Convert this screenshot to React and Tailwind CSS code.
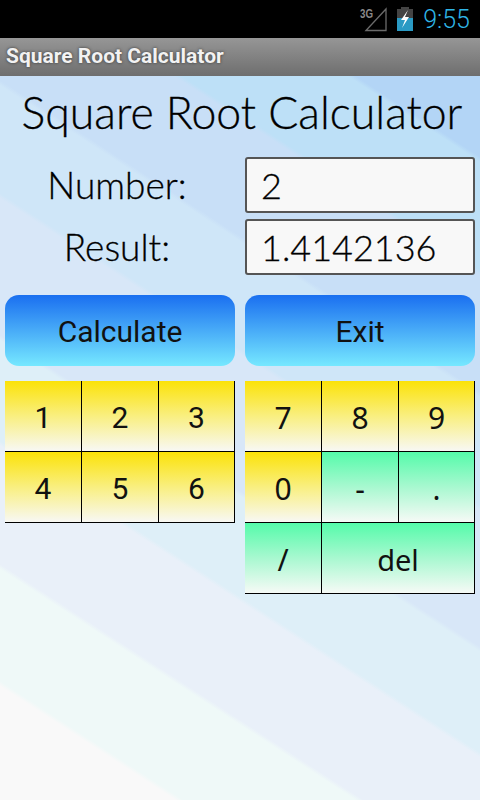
import React from 'react';

const YELLOW = 'bg-[linear-gradient(to_bottom,#fbe208,#f9ef80_50%,#f8f8f4)]';
const GREEN = 'bg-[linear-gradient(to_bottom,#55fbaa,#a8f8d0_50%,#f6faf6)]';
const BLUE_BTN = "h-[71px] w-[230px] rounded-[14px] bg-[linear-gradient(to_bottom,#1a6ff0,#76e8ff)] pt-[2px] text-[30px] text-[#111]";
const COLS = 'grid w-[230px] grid-cols-[77px_77px_76px]';

const Key = ({ label, color = YELLOW, wide }) => (
  <button
    type="button"
    className={`h-[71px] border-r border-b border-black pt-[3px] text-[#111] ${color} ${wide ? 'col-span-2 text-[29px]' : 'text-[30px]'}`}
  >
    {label}
  </button>
);

const Field = ({ label, value }) => (
  <div className="flex gap-[10px]">
    <div className="flex w-[230px] items-center justify-center pr-[6px] text-[37px] text-black [-webkit-text-stroke:0.3px_black]">
      {label}
    </div>
    <input
      readOnly
      value={value}
      className="h-[56px] w-[230px] rounded-[3px] border-2 border-[#555] bg-[#f8f8f8] pl-[14px] text-[36px] text-black outline-none [-webkit-text-stroke:0.3px_black]"
    />
  </div>
);

const StatusBar = () => (
  <div className="flex h-[38px] items-center justify-end bg-black pr-[10px]">
    {/* 3G signal */}
    <svg width="30" height="26" viewBox="0 0 30 26" className="mr-[9px] mt-[-1px]">
      <path d="M8 24.5 L28 3 V24.5 Z" fill="none" stroke="#6b6b6b" strokeWidth="1.3" />
      <text x="2" y="12" fontSize="12" fontWeight="700" fill="#8a8a8a" textLength="13" lengthAdjust="spacingAndGlyphs" fontFamily="'Liberation Sans', sans-serif">3G</text>
    </svg>
    {/* battery, charging */}
    <svg width="16" height="24" viewBox="0 0 16 24" className="mr-[10px]">
      <path d="M4 0 H12 V2 H16 V11 H0 V2 H4 Z" fill="#444" />
      <rect x="0" y="11" width="16" height="13" fill="#2a9ac4" />
      <path d="M11 3 L4 13 H8 L5 21 L12 10 H8 Z" fill="#fff" />
    </svg>
    <span className="font-['Roboto',sans-serif] text-[25px] font-light leading-none text-[#2fb5e6]">9:55</span>
  </div>
);

export default function App() {
  return (
    <div className="h-[800px] w-[480px] overflow-hidden font-['Roboto',sans-serif]">
      <StatusBar />
      <div className="flex h-[38px] items-center bg-[linear-gradient(to_bottom,#969696,#6e6e6e)] pl-[6px] text-[21px] font-bold text-[#f2f2f2] [text-shadow:0_0_3px_#333]">
        Square Root Calculator
      </div>
      <div className="h-[724px] bg-[linear-gradient(33deg,#f9f9f9_11%,#eff9f8_11.5%,#eff9f8_22.3%,#e9f0f9_22.8%,#e9f0f9_34.2%,#deeff8_34.7%,#deeff8_44.4%,#d8e7f8_44.9%,#d8e7f8_58.1%,#cfe6f8_58.6%,#cfe6f8_69%,#c8dff7_69.5%,#c8dff7_80.8%,#bde0f7_81.3%,#bde0f7_91.7%,#b3d5f6_92.2%)] px-[5px]">
        <h1 className="flex h-[81px] items-center justify-center pb-[8px] pl-[4px] font-['Lato',sans-serif] text-[44.6px] font-light text-black [-webkit-text-stroke:0.3px_black]">
          Square Root Calculator
        </h1>
        <div className="flex flex-col gap-[6px] font-['Lato',sans-serif] font-light">
          <Field label="Number:" value="2" />
          <Field label="Result:" value="1.4142136" />
        </div>
        <div className="mt-[20px] flex gap-[10px]">
          <button type="button" className={BLUE_BTN}>Calculate</button>
          <button type="button" className={BLUE_BTN}>Exit</button>
        </div>
        <div className="mt-[15px] flex items-start gap-[10px]">
          <div className={COLS}>
            {['1', '2', '3', '4', '5', '6'].map((k) => <Key key={k} label={k} />)}
          </div>
          <div className={`${COLS} font-['Noto_Sans',sans-serif]`}>
            {['7', '8', '9', '0'].map((k) => <Key key={k} label={k} />)}
            <Key label="-" color={GREEN} />
            <Key label="." color={GREEN} />
            <Key label="/" color={GREEN} />
            <Key label="del" color={GREEN} wide />
          </div>
        </div>
      </div>
    </div>
  );
}
